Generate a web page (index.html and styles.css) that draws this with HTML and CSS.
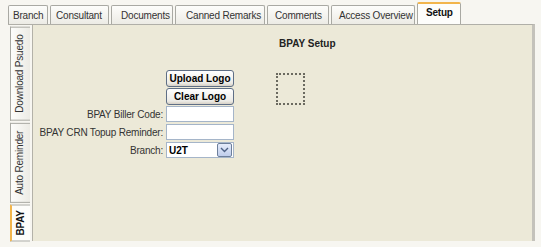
FILE: index.html
```html
<!DOCTYPE html>
<html lang="en">
<head>
  <meta charset="UTF-8">
  <title>BPAY Setup</title>
  <link rel="stylesheet" href="styles.css">
</head>
<body>
  <div class="window">
    <div class="tabs">
      <div class="tab tab-branch">Branch</div>
      <div class="tab tab-consultant">Consultant</div>
      <div class="tab tab-documents">Documents</div>
      <div class="tab tab-canned">Canned Remarks</div>
      <div class="tab tab-comments">Comments</div>
      <div class="tab tab-access">Access Overview</div>
      <div class="tab tab-setup active">Setup</div>
    </div>

    <div class="panel">
      <div class="side-tabs">
        <div class="side-tab side-download">Download Psuedo</div>
        <div class="side-tab side-reminder">Auto Reminder</div>
        <div class="side-tab side-bpay active">BPAY</div>
      </div>

      <div class="content">
        <h1 class="title">BPAY Setup</h1>

        <div class="setup">
          <div class="form-grid">
            <span></span>
            <button class="btn">Upload Logo</button>
            <span></span>
            <button class="btn">Clear Logo</button>

            <label for="biller">BPAY Biller Code:</label>
            <input type="text" id="biller">

            <label for="crn">BPAY CRN Topup Reminder:</label>
            <input type="text" id="crn">

            <label for="branch">Branch:</label>
            <div class="select" id="branch">
              <span class="select-value">U2T</span>
              <span class="select-arrow">
                <svg width="9" height="6" viewBox="0 0 9 6"><path d="M1 1 L4.5 4.5 L8 1" fill="none" stroke="#4d6185" stroke-width="1.4"/></svg>
              </span>
            </div>
          </div>

          <div class="logo-box"></div>
        </div>
      </div>
    </div>
  </div>
</body>
</html>
```

FILE: styles.css
```css
body {
  margin: 0;
  background: #ffffff;
  font-family: "Liberation Sans", Arial, sans-serif;
  font-size: 10px;
  color: #000;
}

.window {
  width: 541px;
  height: 247px;
  background: #f7f6f1;
}

.tabs {
  display: flex;
  align-items: flex-end;
  height: 24px;
  padding-left: 8px;
  gap: 2px;
}

.tab {
  height: 19px;
  line-height: 19px;
  padding: 0 0 0 6px;
  background: linear-gradient(#fdfdfb, #ecebe5);
  border: 1px solid #a9a9a3;
  border-bottom: none;
  border-radius: 2px 2px 0 0;
  color: #333;
  font-size: 10px;
  letter-spacing: -0.2px;
  white-space: nowrap;
  box-sizing: border-box;
}

.tab-branch { width: 40px; padding-left: 4px; }
.tab-consultant { width: 59px; padding-left: 5px; }
.tab-documents { width: 62px; padding-left: 9px; }
.tab-canned { width: 90px; padding-left: 10px; }
.tab-comments { width: 62px; padding-left: 7px; }
.tab-access { width: 84px; padding-left: 7px; }
.tab-setup { width: 44px; }

.tab.active {
  height: 22px;
  line-height: 18px;
  background: #fdfdfb;
  border-top: 2px solid #f2b54c;
  font-weight: bold;
  padding-left: 8px;
  color: #111;
}

.panel {
  display: flex;
  margin: 0 6px 0 8px;
  height: 216px;
  border-top: 1px solid #b0afa8;
  border-right: 3px solid #c4c2bb;
  background: #ece9d8;
}

.side-tabs {
  display: flex;
  flex-direction: column;
  width: 24px;
  padding-top: 2px;
  gap: 2px;
  background: #f7f6f1;
  border-right: 1px solid #b3b1a8;
}

.side-tab {
  writing-mode: vertical-rl;
  transform: rotate(180deg);
  width: 20px;
  margin-left: 2px;
  box-sizing: border-box;
  text-align: center;
  line-height: 18px;
  background: linear-gradient(to left, #fdfdfb, #ecebe5);
  border: 1px solid #a9a9a3;
  border-left: none;
  color: #333;
  font-size: 10px;
  letter-spacing: -0.2px;
  white-space: nowrap;
}

.side-download { height: 95px; }
.side-reminder { height: 81px; }

.side-tab.active {
  height: 37px;
  background: #fdfdfb;
  border-right: 2px solid #f2b54c;
  font-weight: bold;
  color: #111;
}

.content {
  flex: 1;
  padding-top: 13px;
}

.title {
  margin: 0 0 20px 246px;
  font-size: 10px;
  font-weight: bold;
  height: 12px;
  line-height: 12px;
  color: #222;
}

.setup {
  display: flex;
  align-items: flex-start;
}

.form-grid {
  display: grid;
  grid-template-columns: 130px 68px;
  grid-auto-rows: 16px;
  row-gap: 2px;
  column-gap: 3px;
  align-items: center;
}

.form-grid label {
  text-align: right;
  color: #333;
  white-space: nowrap;
  letter-spacing: -0.2px;
}

.btn {
  height: 17px;
  padding: 0;
  font-family: inherit;
  font-size: 10px;
  font-weight: bold;
  color: #000;
  white-space: nowrap;
  background: linear-gradient(#ffffff, #ecebe6 80%, #d6d0c5);
  border: 1px solid #5f6f86;
  border-radius: 3px;
}

.form-grid input {
  height: 16px;
  margin: 0;
  box-sizing: border-box;
  border: 1px solid #a5b5c9;
  background: #fff;
}

.select {
  display: flex;
  align-items: center;
  justify-content: space-between;
  height: 16px;
  box-sizing: border-box;
  border: 1px solid #a5b5c9;
  background: #fff;
  padding: 0 1px 0 2px;
}

.select-value {
  font-weight: bold;
  font-size: 10px;
}

.select-arrow {
  display: flex;
  align-items: center;
  justify-content: center;
  width: 13px;
  height: 12px;
  border: 1px solid #6d7f9b;
  border-radius: 2px;
  background: linear-gradient(#e5ecfb, #bfcdeb);
}

.logo-box {
  width: 29px;
  height: 32px;
  margin: 3px 0 0 42px;
  border: 2px dotted #6b6a60;
  box-sizing: border-box;
}
```
